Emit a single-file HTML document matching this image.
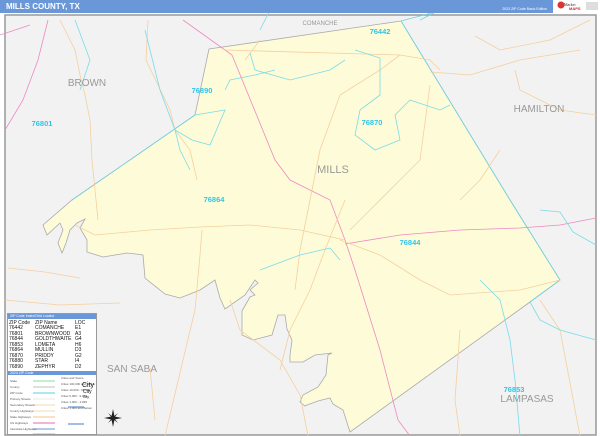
<!DOCTYPE html>
<html><head><meta charset="utf-8"><style>
html,body{margin:0;padding:0;width:600px;height:436px;overflow:hidden;background:#fff;font-family:"Liberation Sans",sans-serif}
.hdr{position:absolute;left:0;top:0;width:553px;height:13px;background:#6a97d8}
.hdr b{position:absolute;left:6px;top:2px;color:#fff;font-size:8px}
.hdr i{position:absolute;right:6px;top:7px;color:#fff;font-size:3.5px;font-style:normal}
.logo{position:absolute;left:555px;top:0;width:45px;height:13px;background:#fff}
.lg{position:absolute;left:7px;top:313px;width:90px;height:122px;background:#fff;border:1px solid #999;box-sizing:border-box;font-size:5px;line-height:5px;color:#111}
.bar{background:#6a97d8;color:#fff;font-size:3.5px;height:5px;line-height:5px;padding-left:2px}
.r{position:absolute;left:1px;white-space:nowrap}
.r span{position:absolute}
</style></head><body>
<div class="hdr"><b>MILLS COUNTY, TX</b><i>2023 ZIP Code Basic Edition</i></div>
<div class="logo"><svg width="45" height="13"><circle cx="6" cy="5" r="3.5" fill="#d33"/><text x="9" y="6" font-size="4" fill="#333" font-family="Liberation Serif">Market</text><text x="14" y="10" font-size="4" fill="#d22" font-weight="bold" font-family="Liberation Sans">MAPS</text><rect x="31" y="2" width="12" height="8" fill="#ddd"/></svg></div>
<svg style="position:absolute;left:0;top:13px" width="600" height="423" viewBox="0 13 600 423">
<rect x="5" y="15" width="591" height="420" fill="#f2f2f2" stroke="#999" stroke-width="1.5"/>
<polygon points="209,49 401,21 510,200 560,280 530,302 350,432 343,410 333,404 330,398 318,401 307,405 305,406 300,402 303,395 318,387 326,375 328,355 332,353 315,355 303,362 290,362 290,355 292,340 287,329 285,315 278,315 272,335 253,340 242,335 242,315 242,311 250,297 255,295 250,290 258,283 255,280 245,295 225,309 220,298 215,280 200,290 180,298 165,294 145,278 143,255 136,254 127,253 103,257 87,252 87,240 80,228 85,219 77,223 70,230 66,243 62,253 58,243 63,230 60,223 47,235 43,225 72,200 195,115" fill="#fefcd8" stroke="#aaa" stroke-width="0.8"/>
<g fill="none" stroke-width="0.8">
<path d="M401,21 L510,200 L560,280 L530,302" stroke="#6dd3e4"/>
<path d="M72,200 L195,115 M401,21 L595,-30 M420,20 L470,-5" stroke="#6dd3e4"/>
<path d="M0,35 L30,25 M48,20 L38,60 L23,100 L5,130 M183,20 L232,55 L275,160 L290,180 L330,200 L345,240 L355,270 L380,350 L398,420 L410,436 M345,244 L400,235 L460,230 L520,228 L560,225 L596,218" stroke="#ee88c0"/>
<path d="M60,20 L75,50 L80,75 L85,95 L90,120 L92,160 L98,220 M148,20 L146,60 L170,110 L175,130 L190,150 L197,180 M202,230 L200,255 L195,310 L183,360 L165,436 M345,200 L325,250 L310,290 L290,330 L280,370 M260,40 L245,60 M225,50 L400,55 L430,60 L440,70 M400,55 L380,70 L340,95 L320,150 L310,200 L300,250 L295,290 M340,240 L380,255 L420,280 L450,295 L520,290 L560,280 M430,85 L420,160 L400,180 L370,210 L350,230 M75,225 L95,235 L150,230 L200,227 L250,225 L300,230 L345,240 M8,268 L45,272 L80,278 M230,300 L240,330 L280,360 L300,395 L308,436 M540,300 L560,330 L580,436 M460,330 L455,400 L460,436 M475,36 L500,50 L550,40 L590,20 M430,72 L470,75 L520,60 L580,50 M515,70 L520,90 L560,110 L596,115 M500,150 L480,180 L460,200 M150,368 L155,420 M5,300 L60,305 L120,303" stroke="#f5cf9e"/>
<path d="M75,20 L90,60 L80,90 M145,30 L160,90 L175,130 L192,140 L210,145 L225,110 L195,115 M250,53 L255,70 L290,80 L330,70 L345,60 M355,50 L380,58 L380,95 L360,110 L355,135 L375,150 L400,140 L395,115 L410,100 L440,110 L450,105 M225,90 L230,80 L255,75 L275,70 M175,130 L180,150 L190,170 M260,270 L300,255 L330,248 M330,248 L340,260 M480,280 L500,300 L510,340 L515,380 L520,436 M530,302 L540,320 L560,330 L596,340 M540,210 L560,212 L573,232 L596,245 M270,10 L260,30" stroke="#79dbe9"/>
</g>
<g font-family="Liberation Sans" text-anchor="middle">
<text x="320" y="25" font-size="6" fill="#999">COMANCHE</text>
<text x="87" y="86" font-size="10" fill="#999">BROWN</text>
<text x="539" y="112" font-size="10" fill="#999">HAMILTON</text>
<text x="132" y="372" font-size="10" fill="#999">SAN SABA</text>
<text x="527" y="402" font-size="10" fill="#999">LAMPASAS</text>
<text x="333" y="173" font-size="11" fill="#999">MILLS</text>
<g font-size="7.5" font-weight="bold" fill="#2fc6ea">
<text x="380" y="34">76442</text><text x="202" y="93">76890</text><text x="42" y="126">76801</text><text x="372" y="125">76870</text><text x="214" y="202">76864</text><text x="410" y="245">76844</text><text x="514" y="392">76853</text></g>
</g>
<g transform="translate(113,418)" fill="#222"><polygon points="0,-9 1.5,-1.5 9,0 1.5,1.5 0,9 -1.5,1.5 -9,0 -1.5,-1.5"/><polygon points="-5,-5 0,-1 5,-5 1,0 5,5 0,1 -5,5 -1,0"/></g>
</svg>
<div class="lg">
<div class="bar">ZIP Code Index/Grid Locator</div>
<div class="r" style="top:7px"><span style="left:0">ZIP Code</span><span style="left:26px">ZIP Name</span><span style="left:66px">LOC</span></div>
<div class="r" style="top:12px"><span>76442</span><span style="left:26px">COMANCHE</span><span style="left:66px">E1</span></div>
<div class="r" style="top:17.5px"><span>76801</span><span style="left:26px">BROWNWOOD</span><span style="left:66px">A3</span></div>
<div class="r" style="top:23px"><span>76844</span><span style="left:26px">GOLDTHWAITE</span><span style="left:66px">G4</span></div>
<div class="r" style="top:28.5px"><span>76853</span><span style="left:26px">LOMETA</span><span style="left:66px">H6</span></div>
<div class="r" style="top:34px"><span>76864</span><span style="left:26px">MULLIN</span><span style="left:66px">D3</span></div>
<div class="r" style="top:39.5px"><span>76870</span><span style="left:26px">PRIDDY</span><span style="left:66px">G2</span></div>
<div class="r" style="top:45px"><span>76880</span><span style="left:26px">STAR</span><span style="left:66px">I4</span></div>
<div class="r" style="top:50.5px"><span>76890</span><span style="left:26px">ZEPHYR</span><span style="left:66px">D2</span></div>
<div class="bar" style="position:absolute;top:57px;left:0;right:0;height:4px">2023 ZIP Code</div>
<svg style="position:absolute;left:0;top:62px" width="88" height="58">
<g stroke-width="1.2" fill="none">
<path d="M25,5h22" stroke="#9be8b0"/><path d="M25,11h22" stroke="#ccc"/><path d="M25,17h22" stroke="#79dbe9"/><path d="M25,23h22" stroke="#eee"/><path d="M25,29h22" stroke="#f5e0c0"/><path d="M25,35h22" stroke="#f5e0c0"/><path d="M25,41h22" stroke="#f5cf9e"/><path d="M25,47h22" stroke="#ee88c0"/><path d="M25,53h22" stroke="#8ad"/><path d="M25,58h22" stroke="#8e8"/>
<path d="M60,31h16M60,48h16" stroke="#6a97d8"/></g>
<g font-size="3" fill="#555" font-family="Liberation Sans">
<text x="2" y="6">State</text><text x="2" y="12">County</text><text x="2" y="18">ZIP Code</text><text x="2" y="24">Primary Streets</text><text x="2" y="30">Secondary Streets</text><text x="2" y="36">County Highways</text><text x="2" y="42">State Highways</text><text x="2" y="48">US Highways</text><text x="2" y="54">Interstate Highways</text>
<text x="53" y="3">Cities and Towns</text><text x="53" y="9">Cities 100,000 and Above</text><text x="53" y="15">Cities 10,000 - 99,999</text><text x="53" y="21">Cities 5,000 - 9,999</text><text x="53" y="27">Cities 1,000 - 4,999</text><text x="53" y="33">Cities 1,000 and Below</text></g>
<g font-size="7" fill="#111"><text x="74" y="11">City</text></g><g font-size="5" fill="#111"><text x="75" y="17">City</text><text x="75" y="22" font-size="3.5">City</text></g>
</svg>
</div>
</body></html>
